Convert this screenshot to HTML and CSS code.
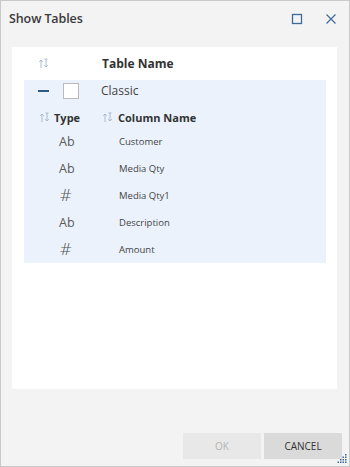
FILE: index.html
```html
<!DOCTYPE html>
<html>
<head>
<meta charset="utf-8">
<link rel="stylesheet" href="styles.css">
</head>
<body>
<div class="dialog">
  <div class="titlebar">
    <div class="title">Show Tables</div>
    <div class="controls">
      <svg class="ctl" width="12" height="12" viewBox="0 0 12 12"><rect x="1.5" y="1.5" width="9" height="9" fill="none" stroke="#3e6a99" stroke-width="1.3"/></svg>
      <svg class="ctl" width="12" height="12" viewBox="0 0 12 12"><path d="M1.5 1.5 L10.5 10.5 M10.5 1.5 L1.5 10.5" stroke="#3e6a99" stroke-width="1.2"/></svg>
    </div>
  </div>
  <div class="panel">
    <div class="thead">
      <span class="sortcol"><svg class="sort" width="11" height="11" viewBox="0 0 11 11"><path d="M3 10 V2 M1.2 3.8 L3 2 L4.8 3.8 M8 1 V9 M6.2 7.2 L8 9 L9.8 7.2 M6.5 1 H9.5" stroke="#a3b6cc" stroke-width="0.9" fill="none"/></svg></span>
      <span class="tname">Table Name</span>
    </div>
    <div class="group">
      <div class="grow">
        <span class="minus"></span>
        <span class="check"></span>
        <span class="gname">Classic</span>
      </div>
      <div class="chead">
        <span class="ctype"><svg class="sort" width="11" height="11" viewBox="0 0 11 11"><path d="M3 10 V2 M1.2 3.8 L3 2 L4.8 3.8 M8 1 V9 M6.2 7.2 L8 9 L9.8 7.2 M6.5 1 H9.5" stroke="#a3b6cc" stroke-width="0.9" fill="none"/></svg>Type</span>
        <span class="cname"><svg class="sort" width="11" height="11" viewBox="0 0 11 11"><path d="M3 10 V2 M1.2 3.8 L3 2 L4.8 3.8 M8 1 V9 M6.2 7.2 L8 9 L9.8 7.2 M6.5 1 H9.5" stroke="#a3b6cc" stroke-width="0.9" fill="none"/></svg>Column Name</span>
      </div>
      <div class="crow"><span class="glyph">Ab</span><span class="col">Customer</span></div>
      <div class="crow"><span class="glyph">Ab</span><span class="col">Media Qty</span></div>
      <div class="crow"><span class="glyph hash">#</span><span class="col">Media Qty1</span></div>
      <div class="crow"><span class="glyph">Ab</span><span class="col">Description</span></div>
      <div class="crow"><span class="glyph hash">#</span><span class="col">Amount</span></div>
    </div>
  </div>
  <div class="footer">
    <button class="btn ok">OK</button>
    <button class="btn cancel">CANCEL</button>
  </div>
  <svg class="grip" width="10" height="10" viewBox="0 0 10 10" fill="#3e6a99">
    <rect x="8" y="0" width="1.5" height="1.5"/>
    <rect x="5.5" y="2.5" width="1.5" height="1.5"/><rect x="8" y="2.5" width="1.5" height="1.5"/>
    <rect x="3" y="5" width="1.5" height="1.5"/><rect x="5.5" y="5" width="1.5" height="1.5"/><rect x="8" y="5" width="1.5" height="1.5"/>
    <rect x="0.5" y="7.5" width="1.5" height="1.5"/><rect x="3" y="7.5" width="1.5" height="1.5"/><rect x="5.5" y="7.5" width="1.5" height="1.5"/><rect x="8" y="7.5" width="1.5" height="1.5"/>
  </svg>
</div>
</body>
</html>
```
FILE: styles.css
```css
* { box-sizing: border-box; }
html, body { margin: 0; padding: 0; }
body { font-family: "Open Sans", "Noto Sans", sans-serif; color: #333; }
.dialog {
  position: relative;
  width: 350px; height: 467px;
  background: #f3f3f3;
  border: 1px solid #c9c9c9;
  display: flex; flex-direction: column;
}
.titlebar {
  height: 35px;
  display: flex; align-items: center; justify-content: space-between;
  padding: 0 12px 0 8px;
}
.title { font-size: 12.5px; font-weight: 600; color: #3a3a3a; letter-spacing: -0.1px; }
.controls { display: flex; gap: 22px; align-items: center; padding-top: 1px; }
.ctl { display: block; }
.panel {
  margin: 11px 12px 0 11px;
  height: 342px;
  background: #fff;
  padding: 0 11px 0 12px;
}
.thead {
  height: 33px;
  display: flex; align-items: center;
}
.sortcol { width: 78px; padding-left: 14px; display: flex; align-items: center; }
.sort { display: block; }
.tname { font-size: 12px; font-weight: 700; color: #333; }
.group { background: #ebf2fc; height: 183px; }
.grow { height: 28px; display: flex; align-items: center; padding-top: 1px; padding-bottom: 8px; }
.minus { width: 11px; height: 2px; background: #2f5a86; margin-left: 14px; }
.check { width: 16px; height: 16px; background: #fff; border: 1px solid #b9b9b9; margin-left: 14px; }
.gname { margin-left: 22px; font-size: 12px; color: #444; }
.chead { height: 19px; display: flex; align-items: center; font-size: 11px; font-weight: 700; color: #333; }
.ctype { width: 78px; display: flex; align-items: center; gap: 4px; padding-left: 15px; }
.cname { display: flex; align-items: center; gap: 5px; }
.crow { height: 27px; display: flex; align-items: center; padding-top: 1px; }
.glyph { width: 95px; padding-left: 35px; font-size: 12.5px; color: #5a5a5a; font-weight: 400; }
.glyph.hash { font-size: 16px; padding-left: 35px; font-family: "DejaVu Sans", sans-serif; font-weight: 200; color: #555; }
.col { font-size: 9.5px; color: #444; }
.footer {
  margin-top: auto;
  display: flex; justify-content: flex-end; gap: 3px;
  padding: 0 7px 7px 0;
}
.btn {
  height: 26px; width: 78px;
  border: none; border-radius: 0;
  font-family: "Open Sans", "Noto Sans", sans-serif;
  font-size: 10px;
  padding: 0;
}
.ok { background: #e8e8e8; color: #b5b5b5; }
.cancel { background: #dadada; color: #333; }
.grip { position: absolute; right: 2px; bottom: 2px; }
```
